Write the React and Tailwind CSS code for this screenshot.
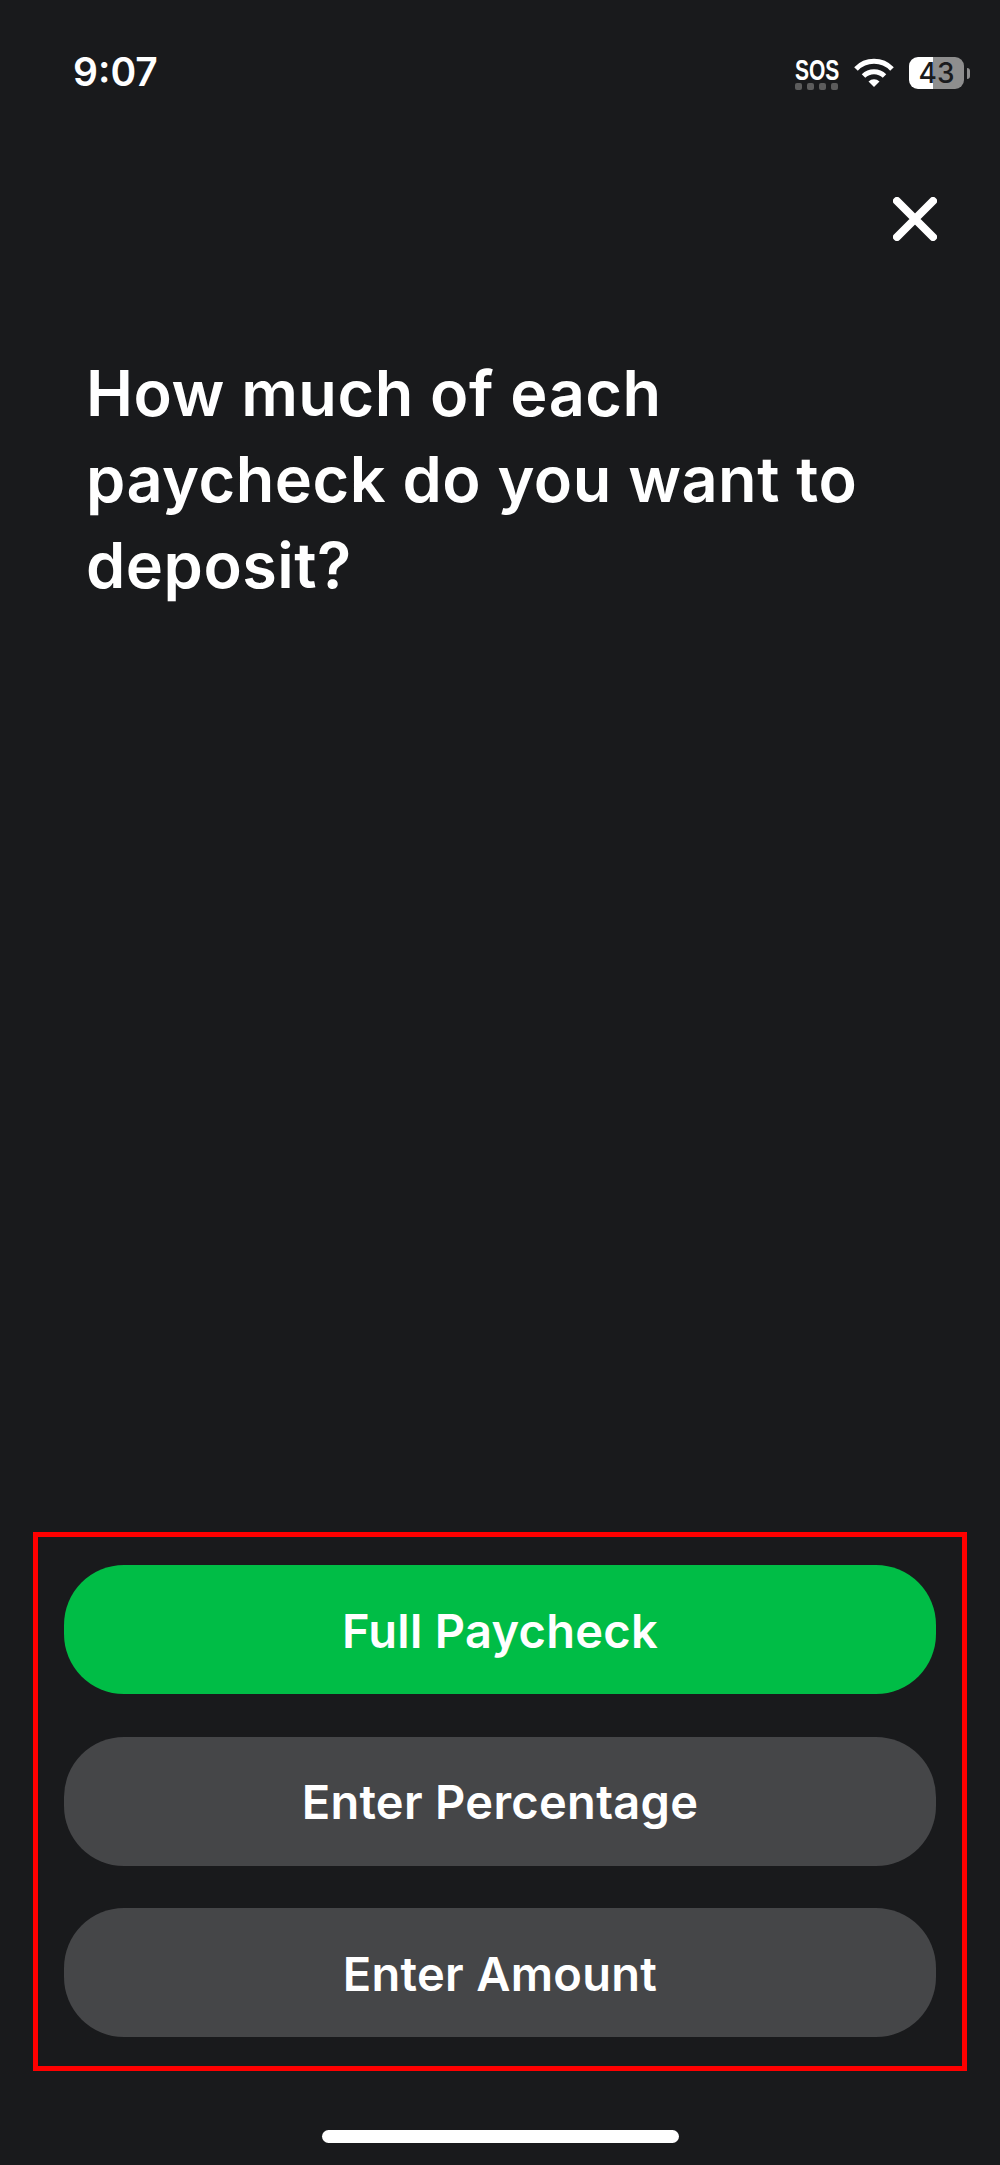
const BUTTONS = [
  { label: "Full Paycheck", color: "bg-[#00bd46]" },
  { label: "Enter Percentage", color: "bg-[#454648]" },
  { label: "Enter Amount", color: "bg-[#454648]" },
];

function Wifi() {
  return (
    <svg width="40" height="30" viewBox="0 0 40 30" fill="none" stroke="#fff" strokeWidth="5">
      <path d="M2 12 A 25 25 0 0 1 38 12" />
      <path d="M9.5 19 A 15 15 0 0 1 30.5 19" />
      <path d="M20 30 L14.5 24.5 A 8 8 0 0 1 25.5 24.5 Z" fill="#fff" stroke="none" />
    </svg>
  );
}

function StatusBar() {
  return (
    <div className="flex items-start justify-between h-[197px] pt-[47px] pl-[73px] pr-[30px] text-white">
      <span className="text-[39px] leading-[50px] font-semibold font-['Inter',sans-serif]">9:07</span>
      <div className="flex items-start pt-[10px]">
        {/* SOS with signal dots */}
        <div className="flex flex-col w-[43px] mr-[16px]">
          <span className="block origin-left scale-x-[.7] whitespace-nowrap h-[26px] text-[30px] leading-[26px] font-bold font-['Liberation_Sans',sans-serif]">
            SOS
          </span>
          <div className="flex justify-between">
            {[0, 1, 2, 3].map((i) => (
              <span key={i} className="w-[7px] h-[7px] rounded-[2px] bg-[#5c5c5c]" />
            ))}
          </div>
        </div>
        <Wifi />
        {/* Battery */}
        <div className="flex items-center ml-[15px] h-[32px]">
          <div className="flex items-center justify-center w-[55px] h-[32px] rounded-[9px] bg-[linear-gradient(90deg,#fff_44%,#8e8e8e_44%)] text-[#1a1b1d] text-[28px] font-medium font-['Inter',sans-serif]">
            43
          </div>
          <div className="ml-[3px] w-[3px] h-[11px] rounded-r-full bg-[#8e8e8e]" />
        </div>
      </div>
    </div>
  );
}

export default function App() {
  return (
    <div className="flex flex-col w-[1000px] h-[2165px] bg-[#191a1c] text-white font-['Inter',sans-serif]">
      <StatusBar />

      <div className="flex justify-end pr-[63px]">
        <svg width="44" height="44" viewBox="0 0 44 44" stroke="#fff" strokeWidth="8" strokeLinecap="round">
          <path d="M4 4 L40 40 M40 4 L4 40" />
        </svg>
      </div>

      <h1 className="mt-[109px] pl-[86px] text-[63px] leading-[86px] tracking-[0.5px] font-semibold">
        How much of each
        <br />
        paycheck do you want to
        <br />
        deposit?
      </h1>

      <div className="flex-1" />

      {/* Red highlight round the actions */}
      <div className="flex flex-col gap-[42.5px] ml-[33px] w-[934px] border-[5px] border-[#ff0000] pt-[28px] pb-[29px] px-[26px]">
        {BUTTONS.map((b) => (
          <button
            key={b.label}
            className={`flex items-center justify-center w-[872px] h-[129px] rounded-[60px] pt-[3px] text-[47px] tracking-[0.3px] font-semibold text-white ${b.color}`}
          >
            {b.label}
          </button>
        ))}
      </div>

      <div className="flex justify-center pt-[59px] pb-[22px]">
        <div className="w-[357px] h-[13px] rounded-full bg-white" />
      </div>
    </div>
  );
}
